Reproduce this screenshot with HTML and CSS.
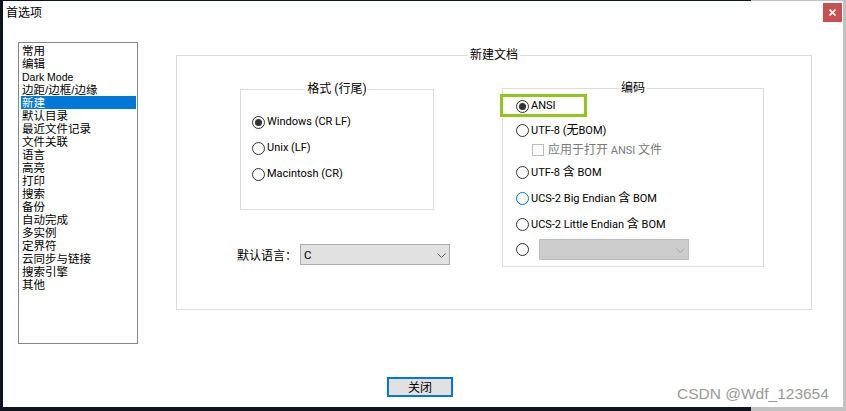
FILE: index.html
```html
<!DOCTYPE html>
<html lang="zh-CN">
<head>
<meta charset="utf-8">
<title>首选项</title>
<link rel="stylesheet" href="styles.css">
</head>
<body>
<div class="window">
  <div class="titlebar">
    <span class="title">首选项</span>
    <span class="close"><svg width="7" height="7" viewBox="0 0 7 7"><path d="M0.5 0.5 L6.5 6.5 M6.5 0.5 L0.5 6.5" stroke="#fff" stroke-width="1.6" fill="none"/></svg></span>
  </div>
  <div class="main">
    <ul class="list">
      <li>常用</li>
      <li>编辑</li>
      <li><span class="latin">Dark Mode</span></li>
      <li>边距/边框/边缘</li>
      <li class="selected">新建</li>
      <li>默认目录</li>
      <li>最近文件记录</li>
      <li>文件关联</li>
      <li>语言</li>
      <li>高亮</li>
      <li>打印</li>
      <li>搜索</li>
      <li>备份</li>
      <li>自动完成</li>
      <li>多实例</li>
      <li>定界符</li>
      <li>云同步与链接</li>
      <li>搜索引擎</li>
      <li>其他</li>
    </ul>
    <div class="group newdoc">
      <div class="legend">新建文档</div>
      <div class="leftcol">
        <div class="group fmt">
          <div class="legend">格式 (行尾)</div>
          <div class="fmt-rows">
            <div class="fmt-row"><span class="radio checked"></span><span class="label">Windows (CR LF)</span></div>
            <div class="fmt-row"><span class="radio"></span><span class="label">Unix (LF)</span></div>
            <div class="fmt-row"><span class="radio"></span><span class="label">Macintosh (CR)</span></div>
          </div>
        </div>
        <div class="langrow">
          <span class="langlabel">默认语言：</span>
          <div class="select"><span class="seltext">C</span><svg class="chev" width="9" height="5" viewBox="0 0 9 5"><path d="M0.5 0.5 L4.5 4.5 L8.5 0.5" stroke="#606060" fill="none"/></svg></div>
        </div>
      </div>
      <div class="group enc">
        <div class="legend">编码</div>
        <div class="highlight"></div>
        <div class="enc-row r1"><span class="radio checked"></span><span class="label">ANSI</span></div>
        <div class="enc-row r2"><span class="radio"></span><span class="label">UTF-8 (<span class="cjk">无</span>BOM)</span></div>
        <div class="enc-row chk"><span class="checkbox"></span><span class="label disabled"><span class="cjk">应用于打开</span> ANSI <span class="cjk">文件</span></span></div>
        <div class="enc-row r4"><span class="radio"></span><span class="label">UTF-8 <span class="cjk">含</span> BOM</span></div>
        <div class="enc-row r5"><span class="radio hover"></span><span class="label">UCS-2 Big Endian <span class="cjk">含</span> BOM</span></div>
        <div class="enc-row r6"><span class="radio"></span><span class="label">UCS-2 Little Endian <span class="cjk">含</span> BOM</span></div>
        <div class="enc-row r7"><span class="radio"></span><div class="select disabled-select"><svg class="chev" width="9" height="5" viewBox="0 0 9 5"><path d="M0.5 0.5 L4.5 4.5 L8.5 0.5" stroke="#a8a8a8" fill="none"/></svg></div></div>
      </div>
    </div>
  </div>
  <div class="footer">
    <button class="btn">关闭</button>
  </div>
  <div class="watermark">CSDN @Wdf_123654</div>
</div>
</body>
</html>
```

FILE: styles.css
```css
html, body {
  margin: 0;
  padding: 0;
}
body {
  width: 846px;
  height: 411px;
  overflow: hidden;
  background: linear-gradient(to right, #0e1520 751px, #c2c2c2 751px);
  font-family: Roboto, "Noto Sans CJK SC", sans-serif;
  font-size: 12px;
  color: #000;
}
.window {
  position: relative;
  margin: 1px 0 0 3px;
  width: 840px;
  height: 406px;
  background: #fff;
  display: flex;
  flex-direction: column;
}
.titlebar {
  height: 23px;
  display: flex;
  justify-content: space-between;
  align-items: flex-start;
}
.title {
  margin: 4px 0 0 3px;
  line-height: 14px;
  font-family: "Noto Sans CJK SC", sans-serif;
}
.close {
  width: 19px;
  height: 19px;
  margin: 2px 1px 0 0;
  background: #c75050;
  display: flex;
  align-items: center;
  justify-content: center;
}
.main {
  display: flex;
  align-items: flex-start;
  padding: 18px 0 0 15px;
}
.list {
  width: 120px;
  height: 302px;
  box-sizing: border-box;
  border: 1px solid #828790;
  margin: 0;
  padding: 1px 1px 1px 2px;
  list-style: none;
  font-family: "Liberation Sans", "Noto Sans CJK SC", sans-serif;
  font-size: 11.5px;
  line-height: 12px;
}
.list li {
  box-sizing: border-box;
  height: 13px;
  padding: 1px 0 0 1px;
  white-space: nowrap;
}
.list .latin {
  font-size: 10.5px;
}
.list li.selected {
  background: #0078d7;
  color: #fff;
}
.group {
  position: relative;
  box-sizing: border-box;
  border: 1px solid #dcdcdc;
}
.legend {
  position: absolute;
  top: -8px;
  left: 50%;
  transform: translateX(-50%);
  background: #fff;
  padding: 0 2px;
  line-height: 14px;
  white-space: nowrap;
}
.newdoc {
  margin: 13px 0 0 38px;
  width: 636px;
  height: 255px;
  display: flex;
  align-items: flex-start;
}
.leftcol {
  margin: 33px 0 0 60px;
  width: 213px;
  display: flex;
  flex-direction: column;
}
.fmt {
  margin-left: 3px;
  width: 194px;
  height: 121px;
}
.fmt-rows {
  padding: 19px 0 0 11px;
}
.fmt-row {
  height: 26px;
  display: flex;
  align-items: center;
}
.radio {
  flex: none;
  position: relative;
  width: 13px;
  height: 13px;
  box-sizing: border-box;
  border: 1px solid #333;
  border-radius: 50%;
  background: #fff;
}
.radio.checked::after {
  content: "";
  position: absolute;
  left: 2px;
  top: 2px;
  width: 7px;
  height: 7px;
  border-radius: 50%;
  background: #333;
}
.radio.hover {
  border-color: #0078d7;
}
.label {
  margin-left: 2px;
  font-size: 11px;
  line-height: 14px;
  white-space: nowrap;
}
.cjk {
  font-family: "Noto Sans CJK SC", sans-serif;
  font-size: 12px;
}
.label.disabled {
  margin-left: 4px;
  color: #7a7a7a;
}
.langrow {
  margin-top: 34px;
  display: flex;
  align-items: center;
}
.langlabel {
  width: 60px;
  font-family: "Noto Sans CJK SC", sans-serif;
}
.select {
  margin-left: 3px;
  width: 150px;
  height: 21px;
  box-sizing: border-box;
  border: 1px solid #adadad;
  background: #e1e1e1;
  display: flex;
  align-items: center;
  justify-content: space-between;
  padding: 0 3px;
}
.seltext {
  font-size: 11.5px;
  line-height: 14px;
}
.chev {
  display: block;
  margin-top: 1px;
}
.enc {
  margin: 32px 0 0 52px;
  width: 262px;
  height: 179px;
  padding: 7px 0 0 13px;
}
.highlight {
  position: absolute;
  left: -3px;
  top: 5px;
  width: 87px;
  height: 23px;
  box-sizing: border-box;
  border: 3px solid #92c61e;
}
.enc-row {
  height: 20px;
  display: flex;
  align-items: center;
}
.enc-row.r2 { margin-top: 4px; }
.enc-row.chk { margin-top: 2px; height: 16px; padding-left: 16px; }
.enc-row.r4 { margin-top: 4px; }
.enc-row.r5 { margin-top: 6px; }
.enc-row.r6 { margin-top: 6px; }
.enc-row.r7 { margin-top: 5px; height: 21px; }
.checkbox {
  flex: none;
  width: 12px;
  height: 12px;
  box-sizing: border-box;
  border: 1px solid #bcbcbc;
  background: #fff;
}
.disabled-select {
  margin-left: 10px;
  background: #cccccc;
  border-color: #bfbfbf;
  justify-content: flex-end;
}
.footer {
  padding: 33px 0 0 384px;
}
.btn {
  display: block;
  width: 66px;
  height: 20px;
  box-sizing: border-box;
  border: 2px solid #0078d7;
  background: #e1e1e1;
  padding: 0;
  margin: 0;
  font-family: "Noto Sans CJK SC", sans-serif;
  font-size: 12px;
  line-height: 14px;
  color: #000;
}
.watermark {
  position: absolute;
  left: 674px;
  top: 384px;
  font-family: "Liberation Sans", Arial, sans-serif;
  font-size: 15.5px;
  line-height: 18px;
  color: #9a9a9a;
  white-space: nowrap;
}
```
